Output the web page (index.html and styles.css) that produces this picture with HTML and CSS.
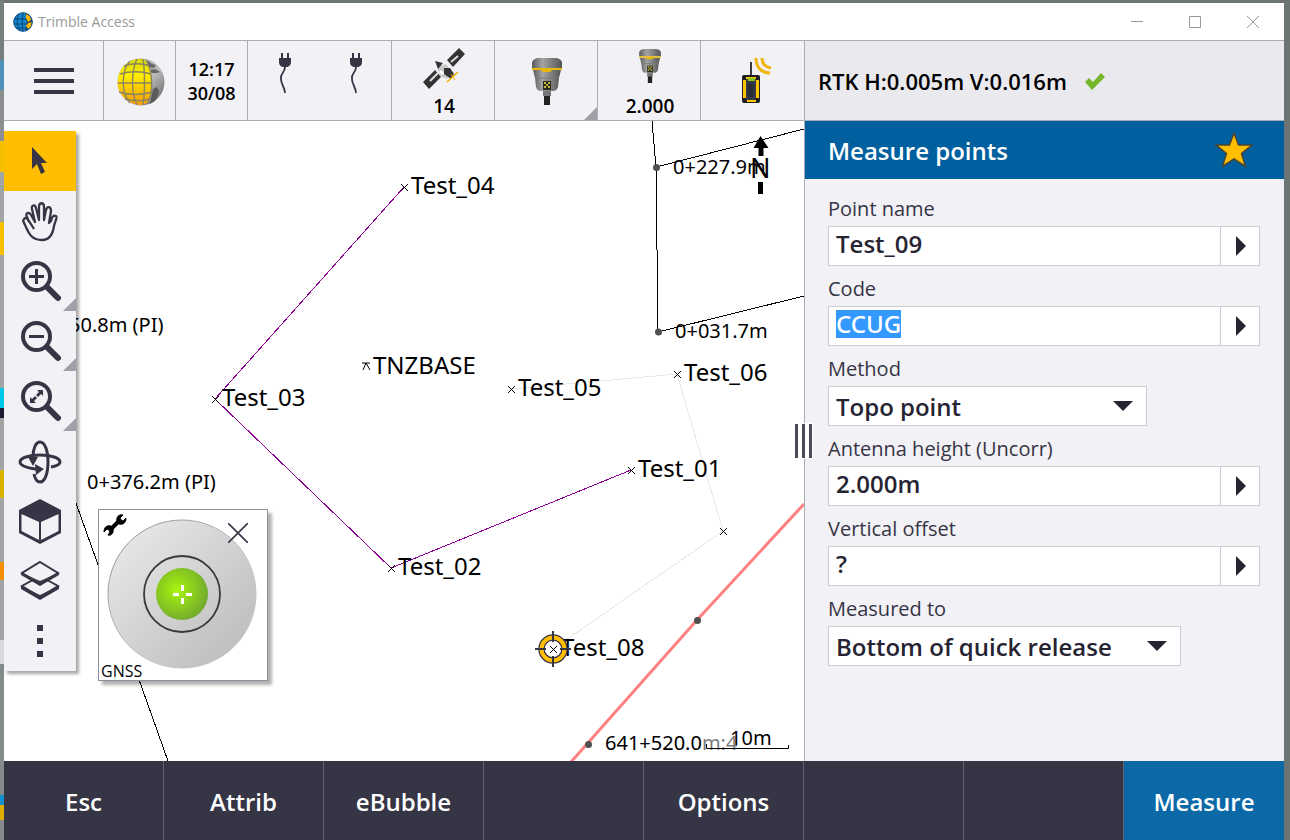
FILE: index.html
```
<!DOCTYPE html>
<html lang="en">
<head>
<meta charset="utf-8">
<title>Trimble Access</title>
<link rel="stylesheet" href="styles.css">
</head>
<body>
<div class="window">
  <header class="titlebar">
    <svg class="app-icon" viewBox="0 0 20 20" width="20" height="20" aria-hidden="true">
      <circle cx="10" cy="10" r="9.3" fill="#1686cf"/>
      <path d="M12 1c5 1 7.400 5 7.300 9s-3 8-7 9c1-6 2-12-.3-18z" fill="#0b4476"/>
      <path d="M13 2l4 2 1 4-3 2-2-4zM15 11l4-1-1 5-3 2-2-3z" fill="#fbb600"/>
      <path d="M1 7h12M1 12h13M3 16h10M6 2C3 7 4 14 7 18M10 1c-1 5-1 12 0 18" stroke="#0b4476" fill="none"/>
      <circle cx="10" cy="10" r="9.300" fill="none" stroke="#0d4a7c"/>
    </svg>
    <span class="app-name">Trimble Access</span>
    <div class="window-controls">
      <button aria-label="Minimize"><svg width="12" height="12" viewBox="0 0 12 12"><path d="M0 5.500h12"/></svg></button>
      <button aria-label="Maximize"><svg width="12" height="12" viewBox="0 0 12 12"><path d="M.5.5h11v11H.5z"/></svg></button>
      <button aria-label="Close"><svg width="12" height="12" viewBox="0 0 12 12"><path d="M0 0l12 12M12 0L0 12"/></svg></button>
    </div>
  </header>

  <div class="statusbar">
    <div class="status-cells">
      <button class="cell" aria-label="Menu"><svg width="40" height="26" viewBox="0 0 40 26"><path d="M0 0h40v4H0zM0 11h40v4H0zM0 22h40v4H0z" fill="#363545"/></svg></button>
      <button class="cell job" aria-label="Job">
        <svg width="48" height="48" viewBox="0 0 48 48">
          <defs>
            <linearGradient id="gy" x1="0" y1="0" x2="0" y2="1"><stop offset="0" stop-color="#d8d800"/><stop offset=".35" stop-color="#fff000"/><stop offset="1" stop-color="#f79b00"/></linearGradient>
            <linearGradient id="gg" x1="0" y1="0" x2="1" y2="1"><stop offset="0" stop-color="#8f8f8f"/><stop offset=".55" stop-color="#bdbdbd"/><stop offset="1" stop-color="#5a5a5a"/></linearGradient>
          </defs>
          <circle cx="24" cy="24" r="23.500" fill="url(#gg)"/>
          <path d="M26 1C10 0 1 11 .7 24S11 47 26 47c7-2 9-11 9-22S32 4 26 1z" fill="url(#gy)"/>
          <path d="M29 2l6 4 4 1-2 3-5-1zM33 12l5-1 5 3-3 1-5 0zM36 31l4-2 2 5-4 9-5 3z" fill="#4b4b4b" opacity=".75"/>
          <path d="M7 8c8-3 19-3 25 0M3 16c9-3 22-3 31 0M1 25h34M2 34c10 3 23 3 33 0M8 41c8 2 17 2 25 0M13 3C4 12 4 36 13 45M20 1c-6 12-6 34 0 46M26 1c2 12 2 34 0 46M30 4c6 10 6 32 1 40" fill="none" stroke="#8a8460" stroke-width="1.400"/>
        </svg>
      </button>
      <div class="cell clock"><span>12:17</span><span>30/08</span></div>
      <div class="cell plugs">
        <svg width="16" height="42" viewBox="0 0 16 42"><use href="#plug"/></svg>
        <svg width="16" height="42" viewBox="0 0 16 42">
          <g id="plug"><path d="M4 0h2v5h4V0h2v5h2v4c0 3-2 5-5 5H7c-3 0-5-2-5-5V5h2z" fill="#363545"/><path d="M8 14c0 6-5 6-4 12 0 6 4 8 4 14" stroke="#363545" stroke-width="1.800" fill="none"/></g>
        </svg>
      </div>
      <button class="cell stacked">
        <svg width="42" height="42" viewBox="0 0 42 42" aria-hidden="true">
          <path d="M0 34l12-12 6 7L6 41zM24 12L36 0l6 6-12 13z" fill="#343434"/>
          <path d="M7 33l8-8M28 14l7-6" stroke="#ddd" stroke-width="2"/>
          <path d="M14 19l9-3 5 7-4 8-7-3z" fill="#c9c9c9"/>
          <path d="M12 13l8 2-5 6zM21 20h6l4 6-3 5-7-5z" fill="#343434"/>
          <path d="M24 34l11-10" stroke="#eeb500" stroke-width="1.600"/><path d="M28 26l4 6" stroke="#eeb500"/>
          <path d="M17 23l3 3" stroke="#fff" stroke-width="3"/>
        </svg>
        <span>14</span>
      </button>
      <button class="cell receiver" aria-label="Receiver">
        <svg width="30" height="47" viewBox="0 0 30 47">
          <defs><linearGradient id="rx"><stop offset="0" stop-color="#5c5c5c"/><stop offset=".35" stop-color="#a4a4a4"/><stop offset="1" stop-color="#555"/></linearGradient></defs>
          <g id="rec">
            <path d="M12 37h6v10h-6z" fill="#222"/><path d="M11 31h8v7h-8z" fill="#777"/>
            <path d="M1 12h28l-2 8-1 9c-1 3-3 4-5 4H9c-2 0-4-1-5-4L3 20z" fill="url(#rx)"/>
            <path d="M0 10V5c0-3 3-5 8-5h14c5 0 8 2 8 5v5z" fill="url(#rx)"/>
            <path d="M3 20h24" stroke="#777"/>
            <path d="M0 10h30v2H20l-2 2h-7l-2-2H0z" fill="#e8b90c"/>
            <path d="M11 23h8v9h-8z" fill="#2b2b22"/>
            <path d="M12 24h2v2h-2zM16 24h2v2h-2zM14 26h2v2h-2zM12 28h2v2h-2zM16 28h2v2h-2z" fill="#c5b83a"/>
          </g>
        </svg>
        <i class="corner"></i>
      </button>
      <button class="cell stacked"><svg class="antenna" width="22" height="34" viewBox="0 0 30 47"><use href="#rec"/></svg><span>2.000</span></button>
      <button class="cell radio" aria-label="Radio">
        <svg width="30" height="47" viewBox="0 0 30 47">
          <path d="M9 5v14" stroke="#3b3b3b" stroke-width="2"/>
          <path d="M14 1c0 9 5 15 14 15M20 1c0 6 3 9 9 10" fill="none" stroke="#efb60c" stroke-width="3"/>
          <rect y="18" width="18" height="28" rx="2" fill="#1c1e22"/>
          <path d="M1 23h4v18H1zM13 23h4v18h-4z" fill="#ffc400"/>
          <path d="M4 20h10v24H4z" fill="#343943"/><path d="M4 20h10v2H4z" fill="#ffc400"/><path d="M6 21h7v3H6z" fill="#83c620"/><path d="M6 27h6v13H6z" fill="#2a2e38"/><path d="M5 43h9v2H5z" fill="#ffc400"/>
        </svg>
      </button>
    </div>
    <div class="rtk">
      <span>RTK H:0.005m V:0.016m</span>
      <svg width="20" height="17" viewBox="0 0 20 17" aria-hidden="true"><path d="M0 9l4-4 4 4 8-9 4 4L7 17z" fill="#76b62c"/></svg>
    </div>
  </div>

  <main class="workspace">
    <section class="map" aria-label="Map">
      <svg class="map-canvas" viewBox="4 121 800 640" preserveAspectRatio="xMinYMin slice">
        <defs>
          <path id="x" d="M-3-3l7 7M4-3l-7 7" stroke="#000" stroke-width="1"/>
          <linearGradient id="fade" gradientUnits="userSpaceOnUse" x1="690" x2="710" y1="0" y2="0"><stop offset=".6" stop-color="#000"/><stop offset=".6" stop-color="#7b7b7b"/></linearGradient>
        </defs>
        <g shape-rendering="crispEdges" fill="none">
          <path d="M677 374L723 531L553 649M511 389L677 374" stroke="#e8e8e8"/>
          <path d="M404 187L215 399L391 568L631 470" stroke="#8a0094"/>
          <path d="M652 121L656 167L658 332L804 296M656 167L804 129M76 503L168 761" stroke="#000"/>
        </g>
        <path d="M804 504L697 620L571 762" stroke="#ff8080" stroke-width="3" fill="none"/>
        <g fill="#505050"><circle cx="656.500" cy="167.500" r="3.500"/><circle cx="658.500" cy="332" r="3.500"/><circle cx="697.500" cy="620.500" r="3.500"/><circle cx="588.500" cy="744.500" r="3.500"/></g>
        <g>
          <use href="#x" x="404" y="187"/><use href="#x" x="215" y="399"/><use href="#x" x="391" y="568"/><use href="#x" x="631" y="470"/>
          <use href="#x" x="677" y="374"/><use href="#x" x="511" y="389"/><use href="#x" x="723" y="531"/>
          <path d="M362 363h8M363 370l3-7 4 7" stroke="#000" fill="none"/>
        </g>
        <g class="point-labels">
          <text x="411" y="194">Test_04</text><text x="222" y="406">Test_03</text><text x="373" y="374">TNZBASE</text>
          <text x="518" y="396">Test_05</text><text x="684" y="381">Test_06</text><text x="638" y="477">Test_01</text>
          <text x="398" y="575">Test_02</text><text x="561" y="656">Test_08</text>
        </g>
        <g class="station-labels">
          <text x="673" y="174">0+227.9m</text><text x="675" y="338">0+031.7m</text><text x="69" y="332">50.8m (PI)</text>
          <text x="87" y="489">0+376.2m (PI)</text><text x="605" y="750" fill="url(#fade)">641+520.0m:4</text><text x="730" y="745">10m</text>
        </g>
        <path d="M706.500 744v4.500h82V745" fill="none" stroke="#000"/>
        <path d="M760.500 136l8 12h-5v8h-5v-8h-5zM758 182h5v12h-5z" fill="#000"/>
        <text class="north" x="750" y="178">N</text>
        <circle cx="553" cy="649" r="11.500" fill="none" stroke="#363545" stroke-width="6.500"/>
        <circle cx="553" cy="649" r="11.500" fill="none" stroke="#ffbe00" stroke-width="4"/>
        <path d="M553 631v11M553 656v11M535 649h11M560 649h11" stroke="#363545" stroke-width="2"/>
        <use href="#x" x="553" y="649"/>
      </svg>

      <nav class="palette" aria-label="Map tools">
        <button class="active" aria-label="Select"><svg width="48" height="48" viewBox="16 137 48 48"><path d="M32 147v22l5-5 4 10 4-2-4-9h6z" fill="#363545"/></svg></button>
        <button aria-label="Pan"><svg width="48" height="48" viewBox="15 197 48 48"><path d="M33 229l-5-8c-2-3-4-4-5-2-2 2 0 3 1 6 3 6 5 15 17 15 8 0 11-7 12-14 1-5 4-9 2-10-3-1-4 1-5 5l-2 2 2-12c0-5-4-5-5-1l-2 10v-13c0-5-5-5-5 0v13l-3-12c-1-4-5-3-4 1l3 13-4-7c-2-4-6-2-4 2l2 5" fill="#f2f1f6" stroke="#363545" stroke-width="2.300" stroke-linejoin="round"/></svg></button>
        <button aria-label="Zoom in"><svg width="48" height="48" viewBox="16 257 48 48"><g id="lens" fill="none" stroke="#363545"><circle cx="36.500" cy="276.500" r="13.500" stroke-width="4"/><path d="M47 287l11 11" stroke-width="6" stroke-linecap="round"/></g><path d="M29 276.500h15M36.500 269v15" stroke="#363545" stroke-width="3"/></svg><i class="corner"></i></button>
        <button aria-label="Zoom out"><svg width="48" height="48" viewBox="16 257 48 48"><use href="#lens"/><path d="M29 276.500h15" stroke="#363545" stroke-width="3"/></svg><i class="corner"></i></button>
        <button aria-label="Zoom extents"><svg width="48" height="48" viewBox="16 257 48 48"><use href="#lens"/><path d="M37 270h6v6l-2-2-3 3-2-2 3-3zM36 283h-6v-6l2 2 3-3 2 2-3 3z" fill="#363545"/></svg><i class="corner"></i></button>
        <button aria-label="Orbit"><svg width="48" height="48" viewBox="16 437 48 48"><g fill="none" stroke="#363545" stroke-width="3"><path d="M33 457c0-9 3-15 7-15 5 0 8 9 8 20s-3 20-8 20c-3 0-5-3-6-8"/><path d="M51 467c6-1 9-3 9-5 0-4-9-7-20-7s-20 3-20 7c0 3 6 6 15 7h4"/></g><path d="M28 457h10l-5 9zM35 464l9 5-8 6z" fill="#363545"/></svg></button>
        <button aria-label="3D view"><svg width="48" height="48" viewBox="16 496 48 48"><path d="M40 498l21 11v23l-21 11-21-11v-23z" fill="#363545"/><path d="M21.500 513l17.500 8v18l-17.500-9zM58.500 513L41 521v18l17.500-9z" fill="#f2f1f6"/></svg></button>
        <button aria-label="Layers"><svg width="48" height="48" viewBox="16 557 48 48"><path d="M40 576l18 10-18 11-18-11z" fill="#f2f1f6" stroke="#363545" stroke-width="2"/><path d="M21 586l19 9 19-9v3l-19 11-19-11z" fill="#363545"/><path d="M40 562l18 11-18 10-18-10z" fill="#f2f1f6" stroke="#363545" stroke-width="2"/><path d="M21 573l19 8 19-8v2l-19 11-19-11z" fill="#363545"/></svg></button>
        <button aria-label="More"><svg width="48" height="48" viewBox="16 617 48 48"><path d="M37 625h6v6h-6zM37 638h6v6h-6zM37 651h6v6h-6z" fill="#363545"/></svg></button>
      </nav>

      <aside class="bubble" aria-label="eBubble">
        <svg class="level" viewBox="0 0 150 150" aria-hidden="true">
          <defs>
            <linearGradient id="dish" x1="0" y1="0" x2="1" y2="1"><stop offset="0" stop-color="#ececec"/><stop offset="1" stop-color="#b8b8b8"/></linearGradient>
            <linearGradient id="rim" x1="0" y1="0" x2=".6" y2=".6"><stop offset="0" stop-color="#888"/><stop offset="1" stop-color="#c4c4c4"/></linearGradient>
            <radialGradient id="green" cx=".4" cy=".42" r=".6"><stop offset="0" stop-color="#a8f40c"/><stop offset="1" stop-color="#74ac2d"/></radialGradient>
          </defs>
          <circle cx="75" cy="75" r="74" fill="url(#dish)" stroke="url(#rim)"/>
          <circle cx="75" cy="75" r="38" fill="none" stroke="#393939" stroke-width="1.800"/>
          <circle cx="75" cy="75" r="26" fill="url(#green)"/>
          <path d="M75.500 66v6M75.500 79v6M66 75.500h6M79 75.500h6" stroke="#fff" stroke-width="3"/>
        </svg>
        <button class="wrench" aria-label="Settings"><svg width="24" height="24" viewBox="0 0 24 24"><path d="M7 17L17 7" stroke="#000" stroke-width="4"/><path d="M14 8c-1-4 2-7 6-6l-3 3 1 2 2 1 3-3c0 5-3 7-7 6zM10 16c1 4-2 7-5 6l2-3-1-2-2-1-3 3c0-5 3-7 7-6z" fill="#000" stroke="#000"/></svg></button>
        <button class="dismiss" aria-label="Close"><svg width="20" height="20" viewBox="0 0 20 20"><path d="M0 0l20 20M20 0L0 20" stroke="#363545" stroke-width="1.600"/></svg></button>
        <span class="source">GNSS</span>
      </aside>
      <div class="splitter"><i></i><i></i><i></i></div>
    </section>

    <section class="panel">
      <div class="panel-head">
        <h1>Measure points</h1>
        <button aria-label="Favorite"><svg width="38" height="36" viewBox="0 0 38 36"><path d="M19 1l4.500 12H37L26.500 21.500l4 13L19 27 7.500 34.500l4-13L1 13h13.500z" fill="#ffbe00" stroke="#4a4536" stroke-width="1.500"/></svg></button>
      </div>
      <form class="form">
        <label for="name">Point name</label>
        <div class="field"><input id="name" value="Test_09"><button type="button" aria-label="Point name options"></button></div>
        <label for="code">Code</label>
        <div class="field"><input id="code" value="CCUG"><button type="button" aria-label="Code options"></button></div>
        <label for="method">Method</label>
        <div class="drop"><select id="method"><option>Topo point</option></select></div>
        <label for="height">Antenna height (Uncorr)</label>
        <div class="field"><input id="height" value="2.000m"><button type="button" aria-label="Antenna height options"></button></div>
        <label for="offset">Vertical offset</label>
        <div class="field"><input id="offset" value="?"><button type="button" aria-label="Vertical offset options"></button></div>
        <label for="measured">Measured to</label>
        <div class="drop wide"><select id="measured"><option>Bottom of quick release</option></select></div>
      </form>
    </section>
  </main>

  <footer class="softkeys">
    <button>Esc</button><button>Attrib</button><button>eBubble</button><button aria-label="Unassigned"></button><button>Options</button><button aria-label="Unassigned"></button><button aria-label="Unassigned"></button><button class="primary">Measure</button>
  </footer>
</div>
<script src="app.js"></script>
</body>
</html>
```
FILE: styles.css
```
* { box-sizing: border-box; }
html, body { height: 100%; }
body {
  margin: 0;
  padding: 3px 6px 0 4px;
  font-family: "Open Sans", "Noto Sans", sans-serif;
  color: #000;
  background:
    linear-gradient(#767e7e 0 60px, #4d90b8 60px 90px, #8b8f90 90px 141px, #f6c000 141px 172px, #a0a4a4 172px 222px, #f6c000 222px 255px, #a0a4a4 255px 388px, #00c8e8 388px 408px, #1a1a30 408px 418px, #a0a4a4 418px 470px, #d8b400 470px 498px, #a0a4a4 498px 562px, #f59000 562px 580px, #a0a4a4 580px 640px, #d8dade 640px 664px, #858b8b 664px 795px, #0d92ce 795px 805px, #e0ac00 805px 820px, #858b8b 820px) 0 0 / 4px 100% no-repeat,
    #6c7474;
  overflow: hidden;
}
button {
  margin: 0;
  padding: 0;
  border: 0;
  border-radius: 0;
  background: none;
  font: inherit;
  color: inherit;
}
svg { display: block; flex: none; }
.window {
  height: 100%;
  display: grid;
  grid-template-rows: 37px 81px minmax(0, 1fr) 79px;
  background: #fff;
}
.titlebar { display: flex; align-items: center; padding: 0 2px 0 9px; }
.app-name { margin-left: 5px; font-size: 14px; color: #999; }
.window-controls { display: flex; margin-left: auto; }
.window-controls button { width: 58px; height: 36px; display: grid; place-items: center; }
.window-controls path { fill: none; stroke: #999; }

.statusbar, .workspace {
  display: grid;
  grid-template-columns: minmax(0, 801fr) minmax(0, 479fr);
}
.statusbar { border: solid #acacb5; border-width: 1px 0; background: #f2f1f6; }
.status-cells {
  display: grid;
  grid-template-columns: 100fr 72fr 72fr 144fr 103fr 103fr 103fr 104fr;
}
.cell {
  position: relative;
  display: flex;
  align-items: center;
  justify-content: center;
  border-right: 1px solid #acacb5;
  font-weight: 600;
}
.job { padding: 2px 0 0 2px; }
.clock { flex-direction: column; font-size: 18px; line-height: 24px; }
.plugs { justify-content: space-around; align-items: flex-start; padding: 12px 0 0 2px; }
.stacked { flex-direction: column; justify-content: flex-end; padding: 0 0 1px 2px; font-size: 19px; line-height: 26px; }
.stacked svg { margin-bottom: 3px; }
.stacked .antenna { margin-bottom: 10px; }
.receiver { padding: 2px 0 0 2px; }
.radio { padding-left: 8px; }
.corner {
  position: absolute;
  right: 0;
  bottom: 0;
  width: 13px;
  height: 13px;
  background: #9f9fa8;
  clip-path: polygon(100% 0, 100% 100%, 0 100%);
}
.rtk {
  display: flex;
  align-items: center;
  gap: 18px;
  padding: 1px 13px 0;
  background: #eae9ee;
  font-size: 22px;
  font-weight: 600;
}

.map { position: relative; overflow: visible; border-right: 1px solid #acacb5; }
.map-canvas { width: 100%; height: 100%; font-family: "Noto Sans", "Open Sans", sans-serif; }
.point-labels { font-size: 24px; }
.north { font-size: 27px; }
.station-labels { font-size: 20px; }
.palette {
  position: absolute;
  left: 0;
  top: 10px;
  width: 72px;
  background: #f2f1f6;
  box-shadow: 3px 3px 3px rgba(0, 0, 0, .35);
}
.palette button { position: relative; width: 100%; height: 60px; display: grid; place-items: center; }
.palette .active { background: #ffbe00; }
.bubble {
  position: absolute;
  left: 94px;
  top: 388px;
  width: 170px;
  height: 172px;
  background: #fff;
  border: 1px solid #8e8e9c;
  box-shadow: 4px 4px 3px rgba(0, 0, 0, .3);
  font-size: 16px;
}
.level { width: 150px; margin: 9px 0 0 8px; }
.wrench, .dismiss, .source { position: absolute; }
.wrench { left: 4px; top: 3px; }
.dismiss { right: 19px; top: 13px; }
.source { left: 2px; bottom: 0; line-height: 18px; }
.splitter {
  position: absolute;
  z-index: 1;
  right: -9px;
  top: 302px;
  display: flex;
  gap: 4px;
  padding: 1px;
  background: #fff;
}
.splitter i { width: 3px; height: 34px; background: #4a4a5a; }

.panel { background: #f2f1f6; }
.panel-head {
  height: 58px;
  display: flex;
  align-items: center;
  justify-content: space-between;
  padding: 0 31px 0 23px;
  background: #005f9f;
  color: #fff;
}
.panel-head h1 { margin: 0; font-size: 24px; font-weight: 600; }
.form { display: flex; flex-direction: column; padding: 7px 24px 0 23px; color: #262433; }
.form label { height: 40px; padding-top: 8px; font-size: 20px; line-height: 30px; color: #363545; }
.field { display: flex; height: 40px; border: 1px solid #cdccd4; background: #fff; }
.field input, .drop select {
  min-width: 0;
  border: 0;
  outline: 0;
  border-radius: 0;
  background: #fff;
  color: #262433;
  font: 600 24px/28px "Open Sans", "Noto Sans", sans-serif;
}
.field input { flex: 1; padding: 0 7px 4px; }
.field input:focus { font-family: "Noto Sans", "Open Sans", sans-serif; font-weight: 500; }
.field input::selection { background: #3399ff; color: #fff; }
.field button { width: 39px; padding-left: 2px; border-left: 1px solid #cdccd4; display: grid; place-items: center; }
.field button::before {
  content: "";
  border: solid transparent;
  border-width: 10px 0 10px 10px;
  border-left-color: #262433;
}
.drop { position: relative; width: 319px; height: 40px; }
.drop.wide { width: 353px; }
.drop select { appearance: none; width: 100%; height: 100%; border: 1px solid #cdccd4; padding: 1px 7px 0; }
.drop::after {
  content: "";
  position: absolute;
  right: 14px;
  top: 15px;
  border: solid transparent;
  border-width: 10px 10px 0;
  border-top-color: #262433;
}

.softkeys { display: grid; grid-template-columns: repeat(8, minmax(0, 1fr)); background: #363545; }
.softkeys button { border-right: 1px solid #62616e; padding-top: 1px; font-size: 24px; font-weight: 600; color: #fff; }
.softkeys .primary { border: 0; background: #0c69a8; }
```
FILE: app.js
```
const code = document.getElementById('code');
code.focus();
code.select();
```
